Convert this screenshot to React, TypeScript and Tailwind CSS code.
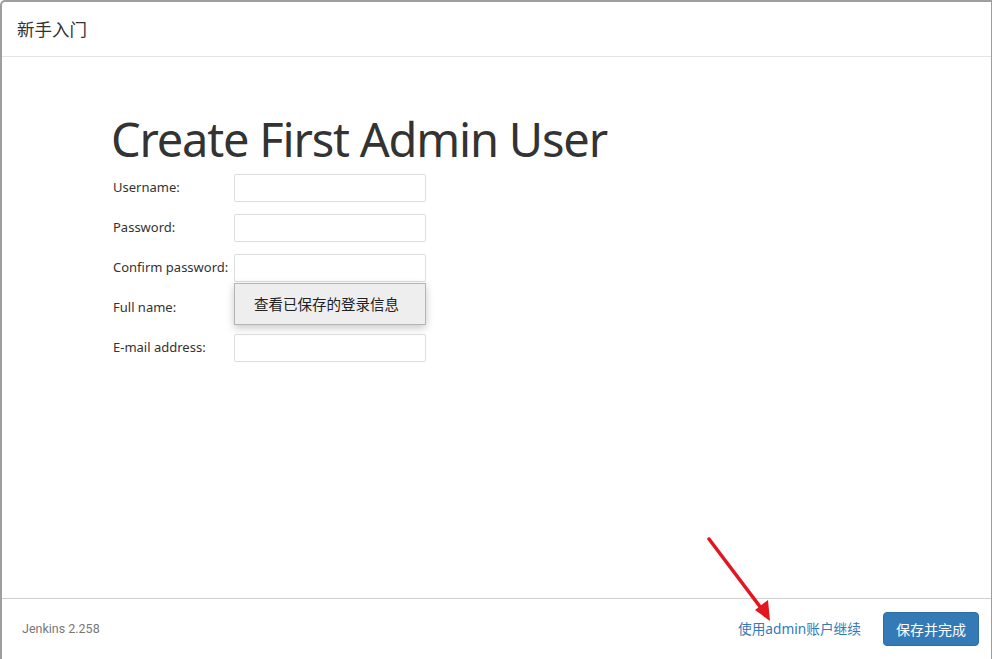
import React from 'react';

const fields = [
  { label: 'Username:', type: 'text' },
  { label: 'Password:', type: 'password' },
  { label: 'Confirm password:', type: 'password' },
  { label: 'Full name:', type: 'text' },
  { label: 'E-mail address:', type: 'text' },
];

function Arrow() {
  return (
    <svg
      className="pointer-events-none absolute left-[700px] top-[530px]"
      width="80"
      height="95"
      viewBox="0 0 80 95"
    >
      <line x1="7" y1="7" x2="62" y2="80" stroke="#e3161f" strokeWidth="3.5" strokeLinecap="round" />
      <polygon points="68,89 53,78 66,68" fill="#e3161f" />
    </svg>
  );
}

export default function App() {
  return (
    <div
      className="relative flex h-[659px] w-[992px] flex-col overflow-hidden rounded-tl-[5px] border-t-2 border-r border-l-2 border-[#9e9e9e] bg-white text-[#333]"
      style={{ fontFamily: '"Noto Sans", "Noto Sans CJK SC", sans-serif' }}
    >
      <div className="flex h-[55px] shrink-0 items-center border-b border-[#e5e5e5] pl-[15px]">
        <h4 className="text-[17.5px]" style={{ fontFamily: '"Noto Sans CJK SC", sans-serif' }}>
          新手入门
        </h4>
      </div>

      <div className="flex-1 pl-[109px] pt-[50px]">
        <h1 className="text-[47px] leading-[64px] tracking-[-1.2px] text-[#333]">
          Create First Admin User
        </h1>
        <div className="mt-[3px] flex flex-col gap-[12px]">
          {fields.map((f, i) => (
            <div key={f.label} className="relative flex items-center">
              <label className="w-[123px] pl-[2px] text-[13px]">{f.label}</label>
              <input
                type={f.type}
                className="h-[28px] w-[192px] rounded-[2px] border border-[#ddd] bg-white outline-none"
              />
              {i === 2 && (
                <div className="absolute left-[123px] top-[29px] z-10 flex h-[42px] w-[192px] items-center border border-[#b5b5b5] bg-[#eeeeee] pl-[19px] text-[14.5px] text-[#222] shadow-[0_3px_8px_rgba(0,0,0,0.22)]"
                  style={{ fontFamily: '"Noto Sans CJK SC", sans-serif' }}
                >
                  查看已保存的登录信息
                </div>
              )}
            </div>
          ))}
        </div>
      </div>

      <div className="flex h-[61px] shrink-0 items-center border-t border-[#cfcfcf] pl-[20px] pr-[12px]">
        <span className="text-[12.5px] text-[#777]" style={{ fontFamily: 'Roboto, sans-serif' }}>
          Jenkins 2.258
        </span>
        <div className="ml-auto flex items-center gap-[22px]" style={{ fontFamily: '"Noto Sans", "Noto Sans CJK SC", sans-serif' }}>
          <a className="text-[13.7px] text-[#337ab7]">使用admin账户继续</a>
          <button className="h-[34px] rounded-[4px] border border-[#2e6da4] bg-[#337ab7] px-[12px] text-[14px] text-white">
            保存并完成
          </button>
        </div>
      </div>

      <Arrow />
    </div>
  );
}
